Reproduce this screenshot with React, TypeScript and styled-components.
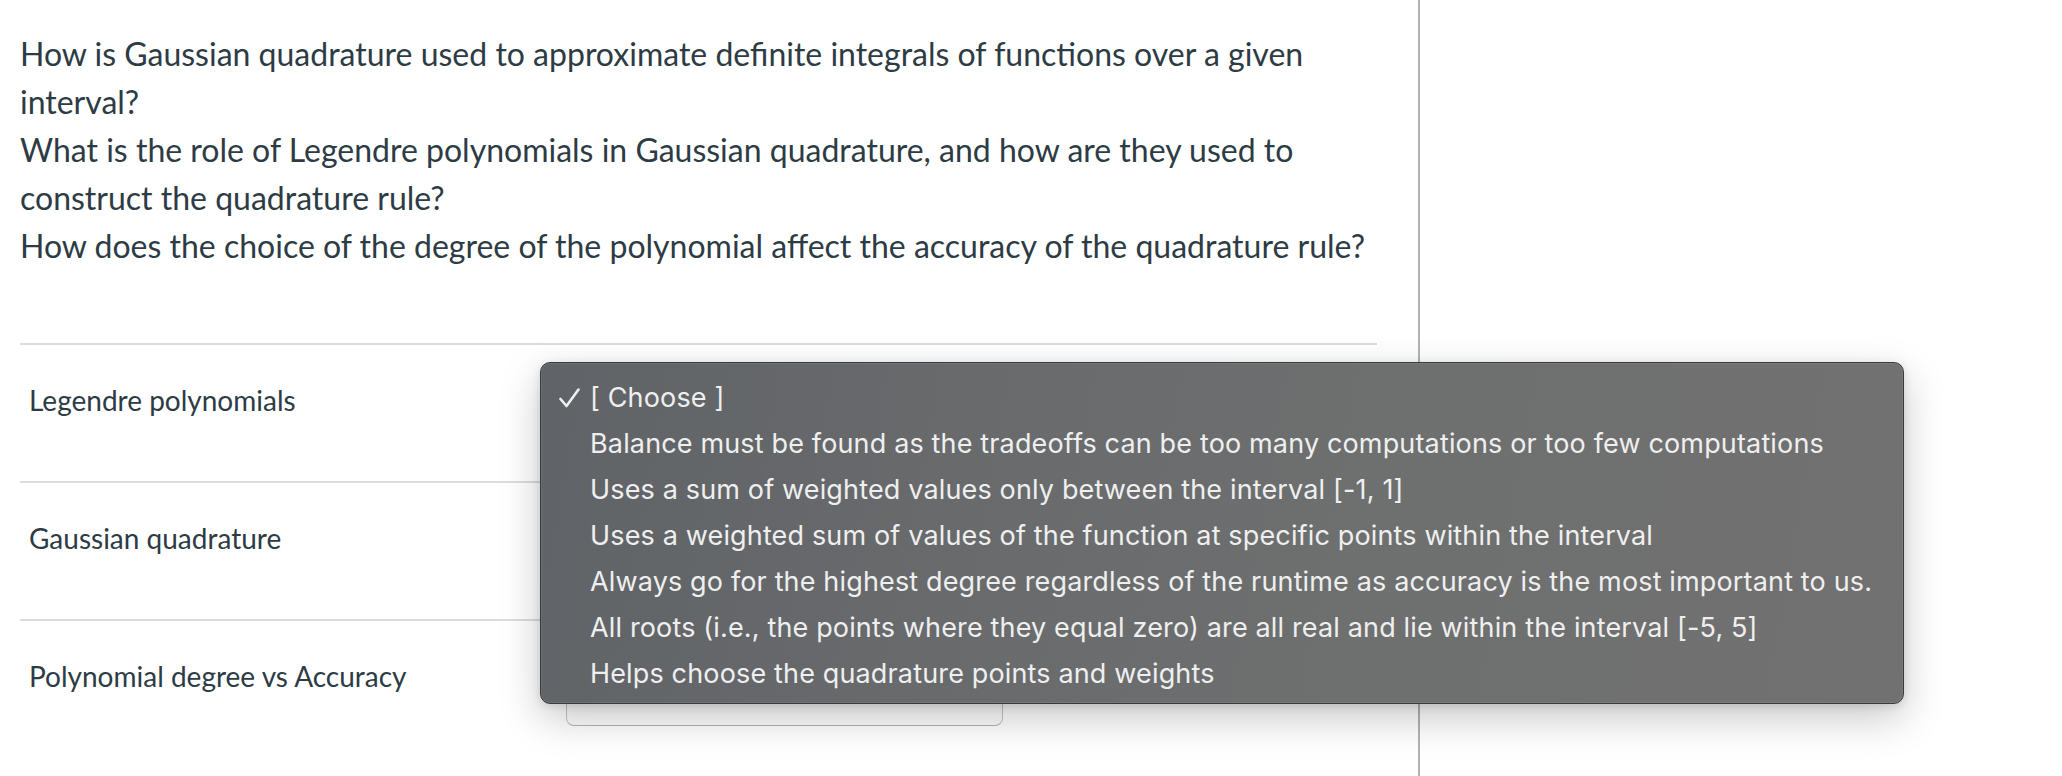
import React from "react";
import styled, { createGlobalStyle } from "styled-components";

const Global = createGlobalStyle`
  html, body { margin: 0; padding: 0; background: #ffffff; }
  body { font-family: Lato, "Noto Sans", sans-serif; -webkit-font-smoothing: antialiased; }
`;

const Page = styled.div`
  position: relative;
  display: flex;
  height: 776px;
  overflow: hidden;
`;

const Main = styled.main`
  width: 1420px;
  flex: none;
  box-sizing: border-box;
  border-right: 2px solid #b3b3b3;
  padding: 30px 41px 0 20px;
`;

const Question = styled.div`
  font-size: 32px;
  line-height: 48px;
  color: #2d3b45;
  margin-bottom: 73px;
`;

const QLine = styled.p`
  margin: 0;
`;

const Row = styled.div`
  display: flex;
  align-items: flex-start;
  border-top: 2px solid #dcdcdc;
  padding: 34px 0 31px 9px;
`;

const Label = styled.div`
  width: 537px;
  flex: none;
  font-size: 28px;
  line-height: 42px;
  color: #2d3b45;
`;

const SelectBox = styled.div`
  width: 437px;
  height: 59px;
  margin-top: 12px;
  box-sizing: border-box;
  border: 1px solid #c4c4c4;
  border-bottom-color: #b5b5b5;
  border-radius: 8px;
  background: #fdfdfd;
`;

const Menu = styled.ul`
  position: absolute;
  left: 540px;
  top: 362px;
  width: 1364px;
  height: 342px;
  box-sizing: border-box;
  margin: 0;
  padding: 12px 0 0 0;
  list-style: none;
  border: 1px solid #3a3a3a;
  border-radius: 10px;
  background: linear-gradient(100deg, #606367 0%, #686a6c 30%, #6e6f6f 60%, #707170 100%);
  box-shadow: 0 14px 40px rgba(0, 0, 0, 0.22), 0 2px 8px rgba(0, 0, 0, 0.12),
    inset 0 0 0 1px rgba(255, 255, 255, 0.08);
  font-family: Inter, Roboto, "Liberation Sans", sans-serif;
  font-size: 27px;
  letter-spacing: 0.15px;
  line-height: 46px;
  color: #efefef;
`;

const Option = styled.li`
  display: grid;
  grid-template-columns: 49px 1fr;
  align-items: center;
  height: 46px;
  white-space: nowrap;
`;

const CheckCell = styled.span`
  display: flex;
  align-items: center;
  padding-left: 18px;
`;

const Check = () => (
  <svg width="21" height="20" viewBox="0 0 21 20" fill="none">
    <path
      d="M1.5 11 L7.5 18 L19.5 1.5"
      stroke="#efefef"
      strokeWidth="2.6"
      strokeLinecap="round"
      strokeLinejoin="round"
    />
  </svg>
);

const questions = [
  "How is Gaussian quadrature used to approximate definite integrals of functions over a given interval?",
  "What is the role of Legendre polynomials in Gaussian quadrature, and how are they used to construct the quadrature rule?",
  "How does the choice of the degree of the polynomial affect the accuracy of the quadrature rule?",
];

const labels = ["Legendre polynomials", "Gaussian quadrature", "Polynomial degree vs Accuracy"];

const options = [
  "[ Choose ]",
  "Balance must be found as the tradeoffs can be too many computations or too few computations",
  "Uses a sum of weighted values only between the interval [-1, 1]",
  "Uses a weighted sum of values of the function at specific points within the interval",
  "Always go for the highest degree regardless of the runtime as accuracy is the most important to us.",
  "All roots (i.e., the points where they equal zero) are all real and lie within the interval [-5, 5]",
  "Helps choose the quadrature points and weights",
];

export default function App() {
  return (
    <Page>
      <Global />
      <Main>
        <Question>
          {questions.map((q) => (
            <QLine key={q}>{q}</QLine>
          ))}
        </Question>
        {labels.map((l) => (
          <Row key={l}>
            <Label>{l}</Label>
            <SelectBox />
          </Row>
        ))}
      </Main>
      <Menu>
        {options.map((o, i) => (
          <Option key={o}>
            <CheckCell>{i === 0 ? <Check /> : null}</CheckCell>
            <span>{o}</span>
          </Option>
        ))}
      </Menu>
    </Page>
  );
}
